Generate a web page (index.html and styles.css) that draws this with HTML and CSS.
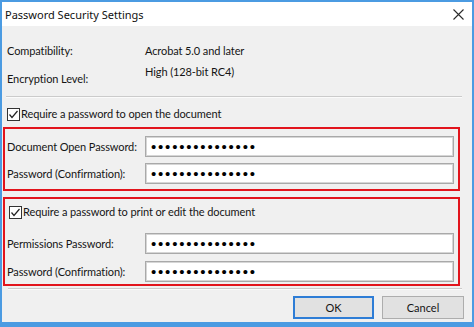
FILE: index.html
```html
<!DOCTYPE html>
<html lang="en">
<head>
<meta charset="utf-8">
<title>Password Security Settings</title>
<link rel="stylesheet" href="styles.css">
</head>
<body>
<div class="window">
  <div class="titlebar">
    <span class="title">Password Security Settings</span>
    <svg class="close" width="11" height="11" viewBox="0 0 11 11" aria-hidden="true">
      <path d="M0.5 0.5 L10.5 10.5 M10.5 0.5 L0.5 10.5" stroke="#2a2a2a" stroke-width="1.1" fill="none"/>
    </svg>
  </div>
  <div class="content">
    <div class="info">
      <div class="info-row r1"><span class="label">Compatibility:</span><span class="value">Acrobat 5.0 and later</span></div>
      <div class="info-row r2"><span class="label">Encryption Level:</span><span class="value">High (128-bit RC4)</span></div>
    </div>
    <div class="sep sep-top"></div>
    <div class="check-row outer-check">
      <span class="checkbox"><svg width="13" height="13" viewBox="0 0 13 13" aria-hidden="true"><path d="M2.5 6.5 L5 9.5 L10.5 3" stroke="#222" stroke-width="1.2" fill="none"/></svg></span>
      <span>Require a password to open the document</span>
    </div>
    <div class="group g1">
      <div class="field-row"><span class="label">Document Open Password:</span><div class="field"><span class="dots">•••••••••••••••</span></div></div>
      <div class="field-row second"><span class="label">Password (Confirmation):</span><div class="field"><span class="dots">•••••••••••••••</span></div></div>
    </div>
    <div class="group g2">
      <div class="check-row inner-check">
        <span class="checkbox"><svg width="13" height="13" viewBox="0 0 13 13" aria-hidden="true"><path d="M2.5 6.5 L5 9.5 L10.5 3" stroke="#222" stroke-width="1.2" fill="none"/></svg></span>
        <span>Require a password to print or edit the document</span>
      </div>
      <div class="field-row first"><span class="label">Permissions Password:</span><div class="field"><span class="dots">•••••••••••••••</span></div></div>
      <div class="field-row second2"><span class="label">Password (Confirmation):</span><div class="field"><span class="dots">•••••••••••••••</span></div></div>
    </div>
    <div class="sep sep-bottom"></div>
    <div class="buttons">
      <button class="btn btn-ok">OK</button>
      <button class="btn btn-cancel">Cancel</button>
    </div>
  </div>
</div>
</body>
</html>
```
FILE: styles.css
```css
html, body {
  margin: 0;
  padding: 0;
}
body {
  font-family: Lato, "Noto Sans", sans-serif;
  font-size: 11px;
  letter-spacing: -0.1px;
  color: #151515;
  background: #fff;
  white-space: nowrap;
}
.window {
  box-sizing: border-box;
  width: 474px;
  height: 327px;
  border: 2px solid #4b9be2;
  border-bottom-width: 5px;
  display: flex;
  flex-direction: column;
}
.titlebar {
  flex: none;
  height: 24px;
  background: #fff;
  display: flex;
  align-items: center;
  justify-content: space-between;
  padding: 0 8px 0 3px;
}
.title {
  font-family: "Noto Sans", "Open Sans", sans-serif;
  font-size: 11px;
  letter-spacing: 0;
  color: #111;
}
.close {
  display: block;
}
.content {
  flex: 1;
  background: #f0f0f0;
  display: flex;
  flex-direction: column;
}
.info {
  padding: 17px 0 0 5px;
}
.info-row {
  display: grid;
  grid-template-columns: 138px auto;
  line-height: 16px;
}
.r1 {
  height: 16px;
}
.r2 {
  margin-top: 5px;
  height: 23px;
}
.r2 .label {
  align-self: end;
}
.r2 .value {
  align-self: start;
}
.sep {
  height: 0;
  border-top: 1px solid #cbcbcb;
  border-bottom: 1px solid #fbfbfb;
}
.sep-top {
  margin: 9px 10px 0 4px;
}
.sep-bottom {
  margin: 2px 10px 0 6px;
}
.check-row {
  display: flex;
  align-items: center;
  height: 16px;
  line-height: 16px;
}
.outer-check {
  margin-top: 8px;
  padding-left: 5px;
}
.inner-check {
  padding-left: 2px;
}
.checkbox {
  box-sizing: border-box;
  width: 13px;
  height: 13px;
  border: 1px solid #333;
  background: #fff;
  margin-right: 1px;
  display: flex;
  align-items: center;
  justify-content: center;
}
.checkbox svg {
  display: block;
  flex: none;
}
.group {
  border: 2px solid #e2141c;
  margin-right: 12px;
  margin-left: 1px;
}
.g1 {
  margin-top: 5px;
  padding: 7px 4px 5px 2px;
}
.g2 {
  margin-top: 6px;
  padding: 5px 4px 2px 2px;
}
.field-row {
  display: grid;
  grid-template-columns: 138px 1fr;
  align-items: center;
  height: 21px;
}
.field-row.second {
  margin-top: 6px;
}
.field-row.first {
  margin-top: 13px;
}
.field-row.second2 {
  margin-top: 7px;
}
.field {
  box-sizing: border-box;
  height: 21px;
  background: #fff;
  border: 1px solid #a9a9a9;
  box-shadow: inset 0 0 0 1px #d6d6d6;
  padding-left: 5px;
  display: flex;
  align-items: center;
}
.dots {
  font-family: "Liberation Sans", Arial, sans-serif;
  font-size: 15px;
  line-height: 15px;
  letter-spacing: 1.8px;
  color: #000;
}
.buttons {
  margin-top: 6px;
  display: flex;
  justify-content: flex-end;
  gap: 8px;
  padding-right: 8px;
}
.btn {
  box-sizing: border-box;
  height: 23px;
  font-family: Lato, "Noto Sans", sans-serif;
  font-size: 11px;
  color: #151515;
  background: #e1e1e1;
  border: 1px solid #adadad;
  padding: 0;
  margin: 0;
}
.btn-ok {
  width: 81px;
  border: 2px solid #2e7dd6;
}
.btn-cancel {
  width: 82px;
}
```
